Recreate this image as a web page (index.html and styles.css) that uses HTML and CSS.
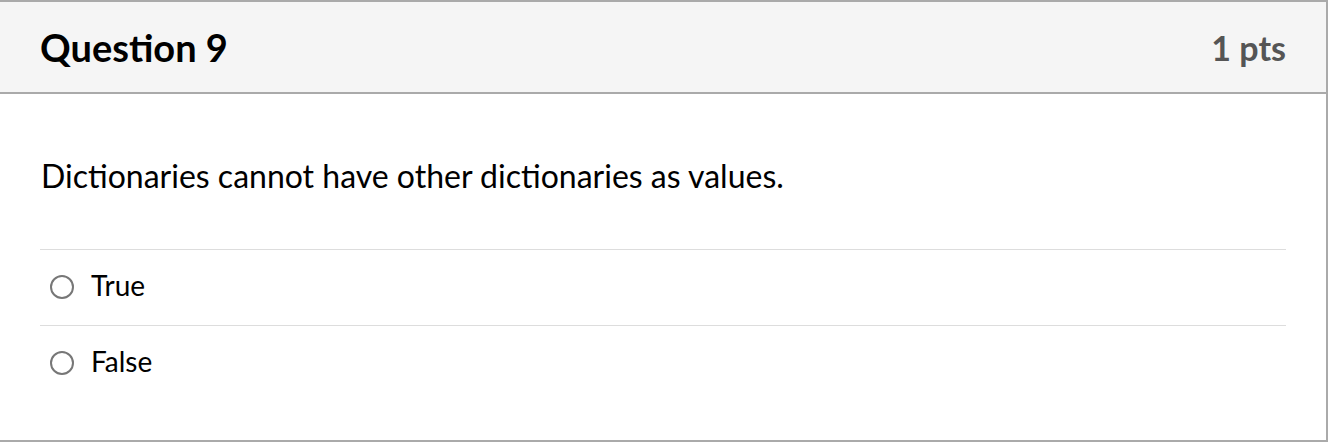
FILE: index.html
```html
<!DOCTYPE html>
<html>
<head>
<meta charset="utf-8">
<link rel="stylesheet" href="styles.css">
</head>
<body>
<div class="card">
  <div class="header">
    <h2 class="title">Question 9</h2>
    <span class="pts">1 pts</span>
  </div>
  <div class="body">
    <p class="question">Dictionaries cannot have other dictionaries as values.</p>
    <div class="answers">
      <label class="answer"><span class="radio"></span><span class="label">True</span></label>
      <label class="answer"><span class="radio"></span><span class="label">False</span></label>
    </div>
  </div>
</div>
</body>
</html>
```
FILE: styles.css
```css
html, body {
  margin: 0;
  padding: 0;
  background: #fff;
}
body {
  font-family: Lato, "Liberation Sans", sans-serif;
  color: #000;
}
.card {
  width: 1328px;
  height: 442px;
  box-sizing: border-box;
  border: 2px solid #aaaaaa;
  border-left: none;
  display: flex;
  flex-direction: column;
}
.header {
  height: 92px;
  flex: none;
  box-sizing: border-box;
  background: #f5f5f5;
  border-bottom: 2px solid #aaaaaa;
  display: flex;
  align-items: center;
  justify-content: space-between;
  padding: 0 40px 0 40px;
}
.title {
  margin: 0;
  font-size: 38px;
  font-weight: 700;
  color: #000;
}
.pts {
  font-size: 34px;
  font-weight: 700;
  color: #555;
}
.body {
  padding: 0 40px;
}
.question {
  margin: 0;
  padding: 64px 0 0 1px;
  height: 156px;
  box-sizing: border-box;
  font-size: 32px;
  line-height: 36px;
  border-bottom: 1px solid #dddddd;
}
.answers {
  display: flex;
  flex-direction: column;
}
.answer {
  display: flex;
  align-items: center;
  height: 75px;
  padding-left: 10px;
  gap: 17px;
  font-size: 28px;
}
.answer + .answer {
  border-top: 1px solid #dddddd;
}
.radio {
  width: 20px;
  height: 20px;
  border: 2px solid #777;
  border-radius: 50%;
  flex: none;
  margin-top: -1px;
}
.label {
  padding-bottom: 5px;
}
```
